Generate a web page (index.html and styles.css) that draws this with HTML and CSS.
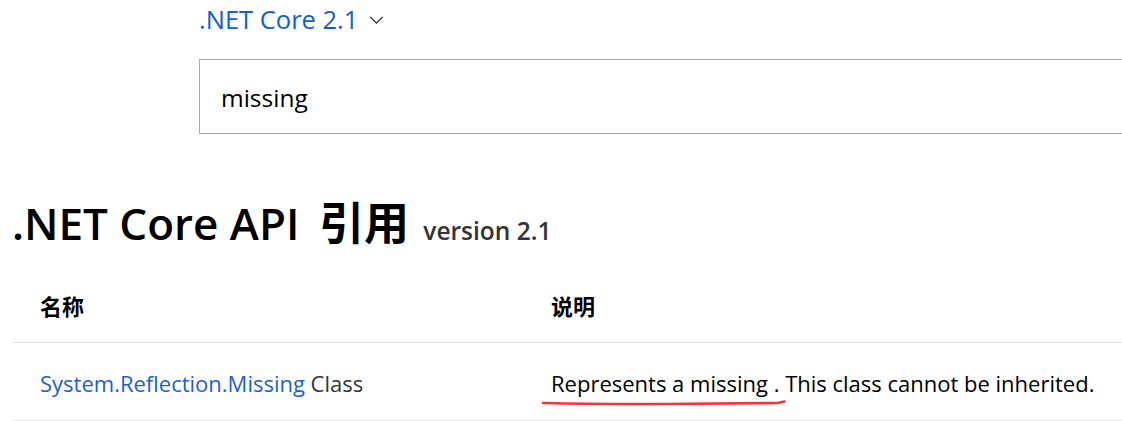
FILE: index.html
```html
<!DOCTYPE html>
<html lang="zh-CN">
<head>
    <meta charset="UTF-8">
    <title>.NET Core API 引用</title>
    <link rel="stylesheet" href="styles.css">
</head>
<body>
    <div class="filter">
        <button class="version-picker">.NET Core 2.1 <svg class="chevron" viewBox="0 0 16 10" width="15" height="9"><path d="M1 1 L8 8 L15 1" fill="none" stroke="#222" stroke-width="1.4"/></svg></button>
        <div class="search-box">missing</div>
    </div>

    <h1 class="page-title">.NET Core API <span class="title-cjk">引用</span> <span class="version">version 2.1</span></h1>

    <table class="api-table">
        <thead>
            <tr>
                <th class="col-name">名称</th>
                <th>说明</th>
            </tr>
        </thead>
        <tbody>
            <tr>
                <td><a href="#">System.Reflection.Missing</a> Class</td>
                <td><span class="marked">Represents a missing .<svg class="scribble" viewBox="0 0 250 8" preserveAspectRatio="none"><path d="M2 4 Q60 5.5 125 5 T240 4 L247 2.5" fill="none" stroke="#f0353d" stroke-width="2.6" stroke-linecap="round"/></svg></span> This class cannot be inherited.</td>
            </tr>
        </tbody>
    </table>
</body>
</html>
```

FILE: styles.css
```css
body {
    margin: 0;
    font-family: "Open Sans", "Noto Sans CJK SC", sans-serif;
    color: #000;
    background-color: #fff;
    overflow: hidden;
}
.filter {
    padding-left: 199px;
}
.version-picker {
    display: flex;
    align-items: center;
    gap: 11px;
    height: 37px;
    padding: 0;
    border: none;
    background: none;
    font-family: inherit;
    font-size: 25.5px;
    color: #1060d8;
    cursor: pointer;
}
.chevron {
    margin-top: 4px;
}
.search-box {
    margin-top: 22px;
    border: 1px solid #aaa;
    border-right: none;
    box-sizing: border-box;
    height: 75px;
    padding: 2px 0 0 21px;
    display: flex;
    align-items: center;
    font-size: 24.5px;
}
.page-title {
    margin: 61px 0 0 12px;
    font-size: 44px;
    font-weight: 600;
    line-height: 56px;
    height: 56px;
}
.title-cjk {
    margin-left: 8px;
    font-size: 45px;
}
.version {
    margin-left: 3px;
    font-size: 24.5px;
    font-weight: 600;
    color: #333;
}
.api-table {
    margin: 17px 0 0 12px;
    width: calc(100% - 12px);
    border-collapse: collapse;
    font-size: 22px;
}
.api-table th {
    text-align: left;
    font-weight: 700;
    font-size: 22px;
    height: 74px;
    padding: 0 0 0 28px;
    border-bottom: 1px solid #e3e3e3;
}
.api-table th.col-name {
    width: 483px;
}
.api-table td {
    height: 75px;
    padding: 2px 0 0 28px;
    border-bottom: 1px solid #e3e3e3;
    color: #333;
}
.api-table td:last-child {
    color: #000;
}
.api-table a {
    color: #1a5fd8;
    text-decoration: none;
}
.marked {
    position: relative;
}
.scribble {
    position: absolute;
    left: -10px;
    bottom: -9px;
    width: calc(100% + 18px);
    height: 8px;
}
```
